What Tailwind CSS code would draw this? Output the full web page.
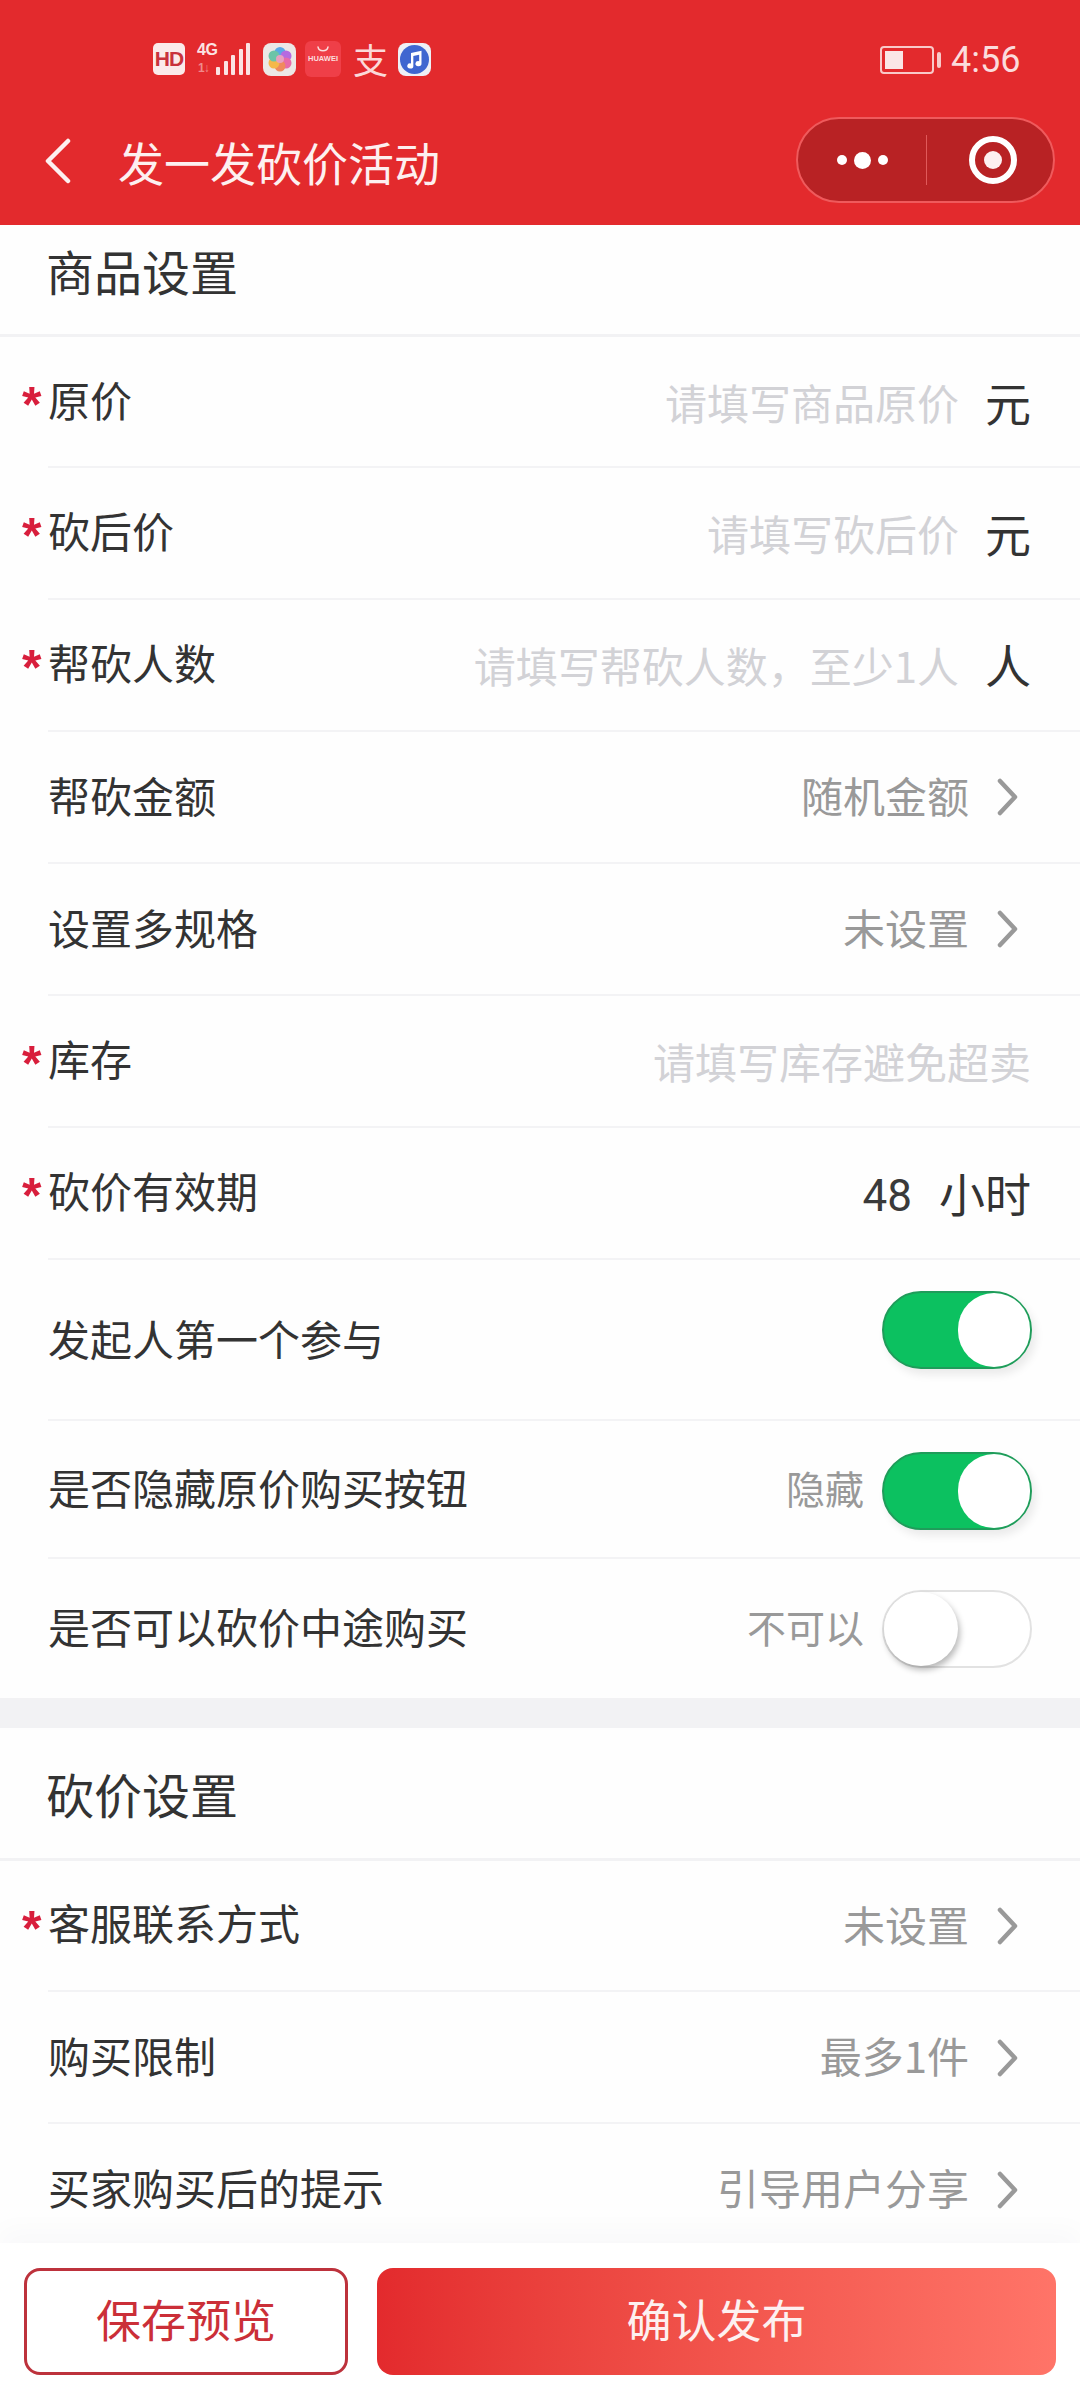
<!DOCTYPE html>
<html lang="zh-CN">
<head>
  <meta charset="UTF-8" />
  <meta name="viewport" content="width=device-width, initial-scale=1.0"/>
  <title>发一发砍价活动</title>
  <script src="https://cdn.jsdelivr.net/npm/@tailwindcss/browser@4"></script>
</head>
<body class="bg-white font-['Noto_Sans_CJK_SC','Noto_Sans',sans-serif]">
  <div class="w-[1080px] h-[2400px] flex flex-col overflow-hidden">

    <!-- red header: status bar + nav -->
    <header class="h-[225px] shrink-0 bg-[#e32a2d] relative text-white">
      <div class="flex items-center h-[36px] absolute left-[153px] top-[41px] gap-[12px]">
        <div class="w-[32px] h-[32px] rounded-[5px] bg-[#fbeaea] text-[#c9323c] text-[21px] font-bold leading-[32px] text-center font-['Liberation_Sans',sans-serif] tracking-[-1px]">HD</div>
        <div class="relative w-[54px] h-[36px]">
          <span class="absolute left-0 top-[1px] text-[16px] font-bold leading-[16px] tracking-[-0.5px] text-[#fbe3e3] font-['Liberation_Sans',sans-serif]">4G</span>
          <span class="absolute left-[1px] top-[20px] text-[12px] font-bold leading-[14px] tracking-[-1px] text-[#f08a8a] font-['Liberation_Sans',sans-serif]">1↓</span>
          <div class="absolute left-[19px] bottom-[2px] h-[32px] flex items-end gap-[3.5px]">
            <div class="w-[4px] h-[8px] bg-[#fbe3e3] rounded-[1px]"></div>
            <div class="w-[4px] h-[14px] bg-[#fbe3e3] rounded-[1px]"></div>
            <div class="w-[4px] h-[20px] bg-[#fbe3e3] rounded-[1px]"></div>
            <div class="w-[4px] h-[26px] bg-[#fbe3e3] rounded-[1px]"></div>
            <div class="w-[4px] h-[32px] bg-[#fbe3e3] rounded-[1px]"></div>
          </div>
        </div>
        <div class="w-[33px] h-[33px] rounded-[8px] bg-[#ece8e6] flex items-center justify-center">
          <svg width="26" height="26" viewBox="0 0 26 26">
            <circle cx="13" cy="6.5" r="5.5" fill="#5aa9e6"/>
            <circle cx="19" cy="10" r="5.5" fill="#b56be0"/>
            <circle cx="19" cy="17" r="5.5" fill="#e86ba8"/>
            <circle cx="13" cy="20" r="5.5" fill="#f08a5d"/>
            <circle cx="7" cy="17" r="5.5" fill="#f5b84a"/>
            <circle cx="7" cy="10" r="5.5" fill="#6cc4a8"/>
            <circle cx="13" cy="13" r="4" fill="#e8a0c0"/>
          </svg>
        </div>
        <div class="w-[36px] h-[36px] ml-[-3px] rounded-[6px] bg-[#ef3f48] flex flex-col items-center justify-start pt-[5px]">
          <svg width="14" height="7" viewBox="0 0 14 7" fill="none" stroke="#fbdede" stroke-width="1.4" stroke-linecap="round"><path d="M2 1c1 5 9 5 10 0"/></svg>
          <span class="text-[7.5px] leading-[9px] mt-[1px] font-bold text-[#fbdede] font-['Liberation_Sans',sans-serif]">HUAWEI</span>
        </div>
        <span class="w-[34px] text-[35px] leading-[36px] text-center text-[#fbd9d9]">支</span>
        <div class="w-[33px] h-[33px] rounded-[8px] bg-[#eef0f6] flex items-center justify-center ml-[-1px]">
          <div class="w-[29px] h-[29px] rounded-full bg-[#3f66d0] flex items-center justify-center">
            <svg width="21" height="21" viewBox="0 0 18 18" fill="#fff"><path d="M6 3.5 15 1.5v11a2.6 2.2 0 1 1-2-2.1V5L8 6.1v8.4a2.6 2.2 0 1 1-2-2.1z"/></svg>
          </div>
        </div>
      </div>

      <div class="absolute left-[880px] top-[44px] flex items-center">
        <div class="w-[54px] h-[28px] border-2 border-[#f9c9c9] rounded-[4px] p-[3px]">
          <div class="w-[18px] h-full bg-[#fbe6e6]"></div>
        </div>
        <div class="w-[4px] h-[16px] bg-[#f9c9c9] rounded-[2px] ml-[3px]"></div>
        <span class="ml-[10px] text-[36px] leading-[32px] text-[#fbdcdc] font-['Roboto',sans-serif]">4:56</span>
      </div>

      <div class="absolute left-[45px] top-[138px] flex items-center">
        <svg width="26" height="46" viewBox="0 0 26 46" fill="none" stroke="#fdf0f0" stroke-width="4.5" stroke-linecap="round" stroke-linejoin="round"><path d="M23 3 3 23l20 20"/></svg>
        <h1 class="ml-[47px] text-[46px] leading-[46px] text-[#fdf0f0] whitespace-nowrap">发一发砍价活动</h1>
      </div>

      <div class="absolute left-[796px] top-[117px] w-[259px] h-[86px] rounded-full bg-[#b82224] border-2 border-[#ef5a5c] flex items-center">
        <div class="w-[128px] flex items-center justify-center gap-[7px]">
          <div class="w-[10px] h-[10px] rounded-full bg-white"></div>
          <div class="w-[17px] h-[17px] rounded-full bg-white"></div>
          <div class="w-[10px] h-[10px] rounded-full bg-white"></div>
        </div>
        <div class="w-[1px] h-[50px] bg-[#e0595a]"></div>
        <div class="flex-1 flex items-center justify-center pl-[5px]">
          <div class="w-[48px] h-[48px] rounded-full border-[6px] border-white flex items-center justify-center">
            <div class="w-[18px] h-[18px] rounded-full bg-[#fdf0f0]"></div>
          </div>
        </div>
      </div>
    </header>

    <main class="flex-1 min-h-0 overflow-hidden bg-[#fefefe]">
      <!-- 商品设置 -->
      <div class="h-[112px] pl-[46px] pb-[20px] flex items-center border-b-[3px] border-[#f2f2f4]">
        <h2 class="text-[48px] leading-[60px] text-[#333]">商品设置</h2>
      </div>

      <div class="h-[129px] relative flex items-center pl-[48px] pr-[49px] text-[42px] leading-[56px]">
        <span class="absolute left-[22px] top-[44px] text-[50px] leading-[48px] font-bold text-[#d81e3c] font-['Liberation_Sans',sans-serif]">*</span>
        <span class="text-[#333] mb-[6px]">原价</span>
        <span class="ml-auto text-[#d2d2d6]">请填写商品原价</span>
        <span class="ml-[26px] mb-[2px] text-[46px] text-[#333]">元</span>
      </div>
      <div class="ml-[48px] h-[2px] bg-[#f3f3f5]"></div>

      <div class="h-[130px] relative flex items-center pl-[48px] pr-[49px] text-[42px] leading-[56px]">
        <span class="absolute left-[22px] top-[44px] text-[50px] leading-[48px] font-bold text-[#d81e3c] font-['Liberation_Sans',sans-serif]">*</span>
        <span class="text-[#333] mb-[6px]">砍后价</span>
        <span class="ml-auto text-[#d2d2d6]">请填写砍后价</span>
        <span class="ml-[26px] mb-[2px] text-[46px] text-[#333]">元</span>
      </div>
      <div class="ml-[48px] h-[2px] bg-[#f3f3f5]"></div>

      <div class="h-[130px] relative flex items-center pl-[48px] pr-[49px] text-[42px] leading-[56px]">
        <span class="absolute left-[22px] top-[44px] text-[50px] leading-[48px] font-bold text-[#d81e3c] font-['Liberation_Sans',sans-serif]">*</span>
        <span class="text-[#333] mb-[6px]">帮砍人数</span>
        <span class="ml-auto text-[#d2d2d6]">请填写帮砍人数，至少1人</span>
        <span class="ml-[26px] mb-[4px] text-[46px] text-[#333]">人</span>
      </div>
      <div class="ml-[48px] h-[2px] bg-[#f3f3f5]"></div>

      <div class="h-[130px] flex items-center pl-[48px] pr-[61px] text-[42px] leading-[56px]">
        <span class="text-[#333] mb-[4px]">帮砍金额</span>
        <span class="ml-auto text-[#999] mb-[4px]">随机金额</span>
        <svg class="ml-[28px]" width="22" height="38" viewBox="0 0 22 38" fill="none" stroke="#999" stroke-width="4.5" stroke-linecap="round" stroke-linejoin="round"><path d="M3 3l15 16L3 35"/></svg>
      </div>
      <div class="ml-[48px] h-[2px] bg-[#f3f3f5]"></div>

      <div class="h-[130px] flex items-center pl-[48px] pr-[61px] text-[42px] leading-[56px]">
        <span class="text-[#333] mb-[4px]">设置多规格</span>
        <span class="ml-auto text-[#999] mb-[4px]">未设置</span>
        <svg class="ml-[28px]" width="22" height="38" viewBox="0 0 22 38" fill="none" stroke="#999" stroke-width="4.5" stroke-linecap="round" stroke-linejoin="round"><path d="M3 3l15 16L3 35"/></svg>
      </div>
      <div class="ml-[48px] h-[2px] bg-[#f3f3f5]"></div>

      <div class="h-[130px] relative flex items-center pl-[48px] pr-[49px] text-[42px] leading-[56px]">
        <span class="absolute left-[22px] top-[44px] text-[50px] leading-[48px] font-bold text-[#d81e3c] font-['Liberation_Sans',sans-serif]">*</span>
        <span class="text-[#333] mb-[6px]">库存</span>
        <span class="ml-auto text-[#d2d2d6]">请填写库存避免超卖</span>
      </div>
      <div class="ml-[48px] h-[2px] bg-[#f3f3f5]"></div>

      <div class="h-[130px] relative flex items-center pl-[48px] pr-[49px] text-[42px] leading-[56px]">
        <span class="absolute left-[22px] top-[44px] text-[50px] leading-[48px] font-bold text-[#d81e3c] font-['Liberation_Sans',sans-serif]">*</span>
        <span class="text-[#333] mb-[6px]">砍价有效期</span>
        <span class="ml-auto mt-[6px] text-[44px] text-[#3a3a3a] font-['Roboto',sans-serif]">48</span>
        <span class="ml-[27px] mb-[2px] text-[46px] text-[#333]">小时</span>
      </div>
      <div class="ml-[48px] h-[2px] bg-[#f3f3f5]"></div>

      <div class="h-[159px] flex items-center pl-[48px] pr-[48px] text-[42px] leading-[56px]">
        <span class="text-[#333] mb-[4px]">发起人第一个参与</span>
        <div class="ml-auto mb-[20px] w-[150px] h-[78px] rounded-full bg-[#0cc160] border-2 border-[#1f9c5a] relative shadow-[4px_6px_8px_rgba(0,0,0,0.08)]">
          <div class="absolute right-[0px] top-[0px] w-[72px] h-[74px] rounded-full bg-white"></div>
        </div>
      </div>
      <div class="ml-[48px] h-[2px] bg-[#f3f3f5]"></div>

      <div class="h-[136px] flex items-center pl-[48px] pr-[48px] text-[42px] leading-[56px]">
        <span class="text-[#333] mb-[5px]">是否隐藏原价购买按钮</span>
        <span class="ml-auto mb-[5px] text-[39px] text-[#999]">隐藏</span>
        <div class="ml-[18px] mt-[4px] w-[150px] h-[78px] rounded-full bg-[#0cc160] border-2 border-[#1f9c5a] relative shadow-[4px_6px_8px_rgba(0,0,0,0.08)]">
          <div class="absolute right-[0px] top-[0px] w-[72px] h-[74px] rounded-full bg-white"></div>
        </div>
      </div>
      <div class="ml-[48px] h-[2px] bg-[#f3f3f5]"></div>

      <div class="h-[139px] flex items-center pl-[48px] pr-[48px] text-[42px] leading-[56px]">
        <span class="text-[#333] mb-[5px]">是否可以砍价中途购买</span>
        <span class="ml-auto mb-[5px] text-[39px] text-[#999]">不可以</span>
        <div class="ml-[18px] w-[150px] h-[78px] rounded-full bg-white border-2 border-[#e2e2e2] relative">
          <div class="absolute left-[0px] top-[0px] w-[74px] h-[74px] rounded-full bg-white shadow-[2px_4px_6px_rgba(0,0,0,0.28)]"></div>
        </div>
      </div>

      <div class="h-[30px] bg-[#f2f2f4]"></div>

      <!-- 砍价设置 -->
      <div class="h-[133px] pl-[46px] pb-[1px] flex items-center border-b-[3px] border-[#f2f2f4]">
        <h2 class="text-[48px] leading-[60px] text-[#333]">砍价设置</h2>
      </div>

      <div class="h-[129px] relative flex items-center pl-[48px] pr-[61px] text-[42px] leading-[56px]">
        <span class="absolute left-[22px] top-[44px] text-[50px] leading-[48px] font-bold text-[#d81e3c] font-['Liberation_Sans',sans-serif]">*</span>
        <span class="text-[#333] mb-[7px]">客服联系方式</span>
        <span class="ml-auto text-[#999] mb-[4px]">未设置</span>
        <svg class="ml-[28px]" width="22" height="38" viewBox="0 0 22 38" fill="none" stroke="#999" stroke-width="4.5" stroke-linecap="round" stroke-linejoin="round"><path d="M3 3l15 16L3 35"/></svg>
      </div>
      <div class="ml-[48px] h-[2px] bg-[#f3f3f5]"></div>

      <div class="h-[130px] flex items-center pl-[48px] pr-[61px] text-[42px] leading-[56px]">
        <span class="text-[#333] mb-[4px]">购买限制</span>
        <span class="ml-auto text-[#999] mb-[4px]">最多1件</span>
        <svg class="ml-[28px] mt-[2px]" width="22" height="38" viewBox="0 0 22 38" fill="none" stroke="#999" stroke-width="4.5" stroke-linecap="round" stroke-linejoin="round"><path d="M3 3l15 16L3 35"/></svg>
      </div>
      <div class="ml-[48px] h-[2px] bg-[#f3f3f5]"></div>

      <div class="h-[130px] flex items-center pl-[48px] pr-[61px] text-[42px] leading-[56px]">
        <span class="text-[#333] mb-[4px]">买家购买后的提示</span>
        <span class="ml-auto text-[#999] mb-[4px]">引导用户分享</span>
        <svg class="ml-[28px] mt-[2px]" width="22" height="38" viewBox="0 0 22 38" fill="none" stroke="#999" stroke-width="4.5" stroke-linecap="round" stroke-linejoin="round"><path d="M3 3l15 16L3 35"/></svg>
      </div>
    </main>

    <!-- bottom actions -->
    <footer class="h-[157px] shrink-0 bg-white flex gap-[29px] pl-[24px] pr-[24px] pt-[25px] pb-[25px] shadow-[0_-14px_24px_rgba(40,40,80,0.025)] relative">
      <button class="w-[324px] pb-[5px] rounded-[16px] border-[3px] border-[#bd323c] text-[45px] text-[#cb2f38]">保存预览</button>
      <button class="flex-1 pb-[5px] rounded-[16px] bg-linear-to-r from-[#e32a2d] to-[#ff7468] text-[45px] text-[#fdf0f0]">确认发布</button>
    </footer>
  </div>
</body>
</html>
